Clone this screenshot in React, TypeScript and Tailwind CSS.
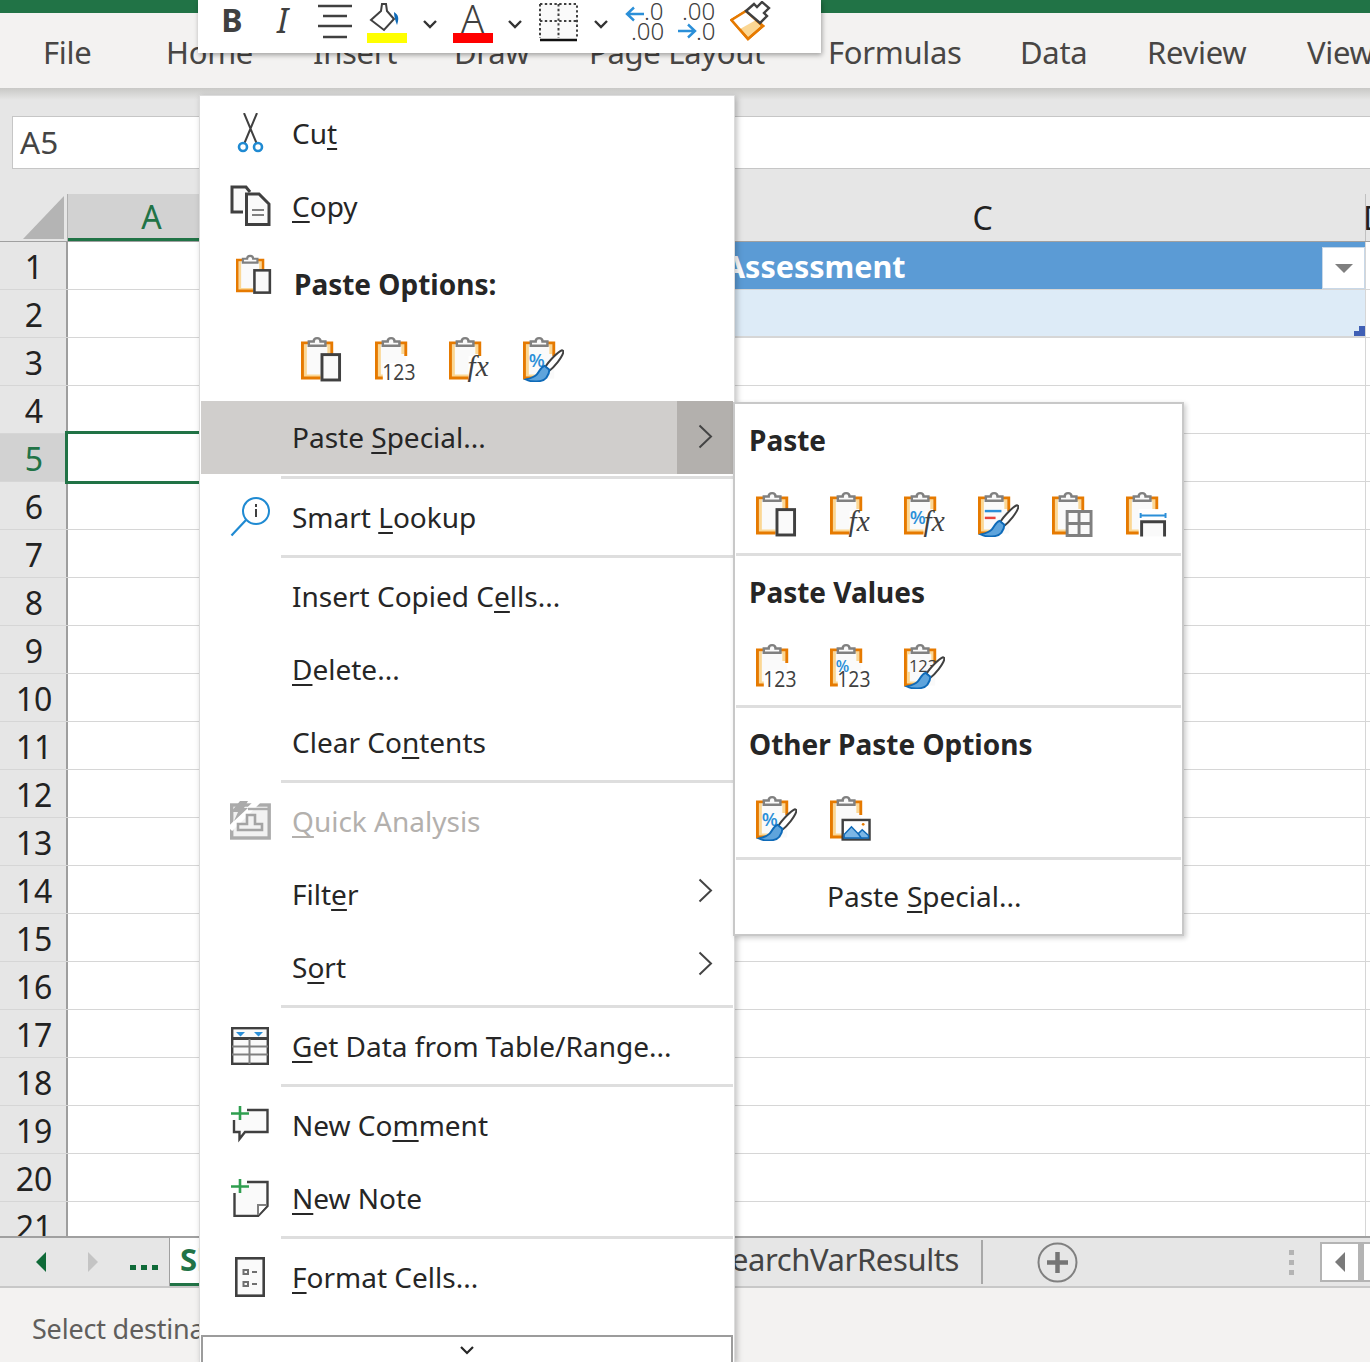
import type { ReactNode } from "react";

const UI = "font-['Open_Sans',sans-serif]";

const U = ({ children }: { children: ReactNode }) => (
  <span className="underline decoration-[1.5px] underline-offset-[4px] [text-decoration-skip-ink:none]">{children}</span>
);

const ClipBase = () => (
  <>
    <rect x="1" y="6" width="31" height="37" fill="#fafafa" />
    <path d="M4.5 8V40.5H20M24 8.5H28.5V18" fill="none" stroke="#fbd794" strokeWidth="3" />
    <path d="M8 6.5H1.5V42.5H20M25 6.5H31.5V20" fill="none" stroke="#e67a00" strokeWidth="3" />
    <path d="M8 9.5V5H13C13 0.5 20 0.5 20 5H25V9.5Z" fill="#fafafa" stroke="#808080" strokeWidth="2.5" />
  </>
);

const Brush = () => (
  <>
    <path d="M40 14C36 15 26 26 23 31L27 35C31 32 41 21 41.5 15Z" fill="#fff" stroke="#404040" strokeWidth="2" />
    <path d="M22 30C18 31 17 36 14 39C11 42 7 43 3 44C9 47 20 47 24 42C27 38 27 35 27 34Z" fill="#5ea4dc" stroke="#0e6ab8" strokeWidth="2" />
  </>
);

const Paper = () => <rect x="21.5" y="18.5" width="18" height="26" fill="#fafafa" stroke="#404040" strokeWidth="3" />;
const Num123 = () => (
  <>
    <rect x="8" y="27" width="34" height="19" fill="#fff" />
    <text x="7.5" y="45" fontSize="23" fontFamily="Open Sans" fill="#404040" textLength="34" lengthAdjust="spacingAndGlyphs">123</text>
  </>
);
const Fx = ({ x = 18 }: { x?: number }) => (
  <>
    <rect x={x + 2} y="20" width="24" height="26" fill="#fff" />
    <text x={x + 1} y="40" fontSize="30" fontStyle="italic" fontFamily="Liberation Serif" fill="#404040">fx</text>
  </>
);
const Pct = ({ y = 31, size = 19 }: { y?: number; size?: number }) => (
  <text x="6" y={y} fontSize={size} fontFamily="Open Sans" fontWeight="600" fill="#2b8fd8">%</text>
);

const PasteIcon = ({ children, size = 41 }: { children?: ReactNode; size?: number }) => (
  <svg width={size} height={(size * 46) / 41} viewBox="0 0 42 46" className="block shrink-0">
    <ClipBase />
    {children}
  </svg>
);

const icons = {
  all: <Paper />,
  values: <Num123 />,
  fx: <Fx />,
  fmtPct: (
    <>
      <Pct />
      <Brush />
    </>
  ),
  fmtLines: (
    <>
      <path d="M7 20H24" stroke="#2b8fd8" strokeWidth="2.5" />
      <path d="M7 27H18" stroke="#e8443a" strokeWidth="2.5" />
      <Brush />
    </>
  ),
  pctFx: (
    <>
      <Fx x={19} />
      <Pct y={33} size={19} />
    </>
  ),
  grid: (
    <path d="M15.5 20.5H40V45H15.5ZM15.5 32.7H40M27.7 20.5V45" fill="#fafafa" stroke="#808080" strokeWidth="3" />
  ),
  width: (
    <>
      <rect x="13" y="18" width="29" height="28" fill="#fff" />
      <path d="M15 22V27M15 24.5H40.5M40.5 22V27" fill="none" stroke="#2b8fd8" strokeWidth="2" />
      <path d="M16 46V31H39.5V46" fill="#fafafa" stroke="#404040" strokeWidth="3" />
    </>
  ),
  pctValues: (
    <>
      <Num123 />
      <Pct y={29} size={16} />
    </>
  ),
  valFmt: (
    <>
      <rect x="4" y="11" width="24" height="18" fill="#fafafa" />
      <text x="5" y="29" fontSize="17" fontFamily="Open Sans" fill="#404040">123</text>
      <Brush />
    </>
  ),
  picture: (
    <>
      <rect x="13" y="25" width="27.5" height="20" fill="#fff" stroke="#404040" strokeWidth="2.5" />
      <path d="M14.5 43.5V40L22 32L33 43.5Z" fill="#7cb7e6" stroke="#0e6ab8" strokeWidth="1.5" />
      <path d="M29 39L33 35L39.5 41V43.5H32Z" fill="#7cb7e6" stroke="#0e6ab8" strokeWidth="1.5" />
      <circle cx="34" cy="29.5" r="1.4" fill="#e67a00" />
    </>
  ),
};

const Chevron = ({ className = "" }: { className?: string }) => (
  <svg width="15" height="25" viewBox="0 0 15 25" className={className}>
    <path d="M1.5 1.5L13 12.5L1.5 23.5" fill="none" stroke="#444" strokeWidth="2" />
  </svg>
);

const SmallDown = () => (
  <svg width="14" height="9" viewBox="0 0 14 9" className="mx-auto block">
    <path d="M1 1L7 7L13 1" fill="none" stroke="#262626" strokeWidth="2.2" />
  </svg>
);

const Scissors = () => (
  <svg width="27" height="40" viewBox="0 0 27 40">
    <path d="M20 0L7.5 30M7 0L19.5 30" fill="none" stroke="#404040" strokeWidth="2" />
    <circle cx="6" cy="34" r="4" fill="#fff" stroke="#1f8ad2" strokeWidth="2.6" />
    <circle cx="21" cy="34" r="4" fill="#fff" stroke="#1f8ad2" strokeWidth="2.6" />
  </svg>
);

const CopyIcon = () => (
  <svg width="41" height="41" viewBox="0 0 41 41">
    <path d="M13 27H2V2H16L20 7" fill="#fafafa" stroke="#404040" strokeWidth="3" />
    <path d="M16.5 9H29L39 19V39.5H16.5Z" fill="#fafafa" stroke="#404040" strokeWidth="3" />
    <path d="M22 25H34M22 30H34" stroke="#808080" strokeWidth="2" />
  </svg>
);

const Lookup = () => (
  <svg width="41" height="41" viewBox="0 0 41 41">
    <circle cx="26" cy="15" r="13" fill="#fff" stroke="#1f8ad2" strokeWidth="2" />
    <path d="M16 24L1.5 39.5" stroke="#1f8ad2" strokeWidth="2.2" />
    <path d="M26 13V21M26 8V11" stroke="#404040" strokeWidth="2" />
  </svg>
);

const QuickAnalysis = () => (
  <svg width="41" height="39" viewBox="0 0 41 39">
    <rect x="1.7" y="4" width="37.5" height="33" fill="#f2f2f2" stroke="#ababab" strokeWidth="3.4" />
    <path d="M0 28L28 0" stroke="#fff" strokeWidth="6" />
    <path d="M10 0H18L14 7H18L4 20L8 11H1Z" fill="#ababab" />
    <path d="M18 8H38" stroke="#ababab" strokeWidth="2.4" />
    <path d="M8 29V23H17V14H25V23H32V29Z" fill="#f2f2f2" stroke="#a4a4a4" strokeWidth="2.6" />
  </svg>
);

const DataTable = () => (
  <svg width="38" height="38" viewBox="0 0 38 38">
    <rect x="1.2" y="1.2" width="35.6" height="35.6" fill="#fafafa" stroke="#404040" strokeWidth="2.4" />
    <rect x="1" y="10" width="36" height="3" fill="#404040" />
    <path d="M5 5H14L9.5 9.5ZM23 5H32L27.5 9.5Z" fill="#2b8fd8" />
    <path d="M1 19.5H37M1 27.5H37M18.5 12V37" stroke="#808080" strokeWidth="2" />
  </svg>
);

const PlusMark = () => <path d="M9 0V14M0 7.5H18" stroke="#2f9e4f" strokeWidth="2.6" fill="none" />;

const CommentIcon = () => (
  <svg width="38" height="38" viewBox="0 0 38 38">
    <path d="M16 4H36.5V26H14L8.5 33V26H3V14" fill="#fafafa" stroke="#404040" strokeWidth="2.4" />
    <PlusMark />
  </svg>
);

const NoteIcon = () => (
  <svg width="38" height="38" viewBox="0 0 38 38">
    <path d="M16 3H36.5V27L27 37H3.5V14" fill="#fafafa" stroke="#404040" strokeWidth="2.4" />
    <path d="M36 26H27V36" fill="#fff" stroke="#808080" strokeWidth="2" />
    <PlusMark />
  </svg>
);

const FormatIcon = () => (
  <svg width="30" height="40" viewBox="0 0 30 40">
    <rect x="1.3" y="1.3" width="27.4" height="37.4" fill="#fafafa" stroke="#404040" strokeWidth="2.6" />
    <path d="M8.5 13H13V17H8.5ZM8.5 25H13V29H8.5Z" fill="none" stroke="#707070" strokeWidth="2" />
    <path d="M17 15H22M17 27H22" stroke="#707070" strokeWidth="2" />
  </svg>
);

const Sep = () => (
  <div className="flex h-[6px] items-center pl-[80px]">
    <div className="h-[3px] w-full bg-[#dedede]" />
  </div>
);

type ItemProps = { icon?: ReactNode; children: ReactNode; arrow?: boolean; muted?: boolean; first?: boolean };

const Item = ({ icon, children, arrow, muted, first }: ItemProps) => (
  <div className={`flex items-center ${first ? "h-[72px]" : "h-[73px]"} ${muted ? "text-[#b3b0ad]" : "text-[#262626]"}`}>
    <div className="flex w-[80px] justify-center pl-[18px]">{icon}</div>
    <div className="flex-1 pl-[11px]">{children}</div>
    {arrow && <Chevron className="mr-[20px] -mt-[6px]" />}
  </div>
);

const ContextMenu = () => (
  <div className="absolute left-[199px] top-[95px] h-[1267px] w-[536px] border border-b-0 border-[#dcdcdc] bg-white px-[1px] pt-[1px] text-[28px] leading-none shadow-[2px_2px_6px_rgba(0,0,0,0.25)]">
    <Item first icon={<Scissors />}>Cu<U>t</U></Item>
    <Item icon={<CopyIcon />}><U>C</U>opy</Item>
    <div className="flex h-[82px] items-center">
      <div className="flex w-[80px] justify-center pb-[18px] pl-[26px]">
        <PasteIcon size={36}><Paper /></PasteIcon>
      </div>
      <div className="pl-[13px] pt-[2px] text-[28px] font-bold text-[#262626]">Paste Options:</div>
    </div>
    <div className="flex h-[77px] items-center gap-[33px] pb-[8px] pl-[100px]">
      <PasteIcon>{icons.all}</PasteIcon>
      <PasteIcon>{icons.values}</PasteIcon>
      <PasteIcon>{icons.fx}</PasteIcon>
      <PasteIcon>{icons.fmtPct}</PasteIcon>
    </div>
    <div className="flex h-[73px] items-center bg-[#d0cecc] text-[#262626]">
      <div className="flex-1 pb-[2px] pl-[91px]">Paste <U>S</U>pecial...</div>
      <div className="flex h-full w-[56px] items-center justify-center bg-[#b3b0ad]"><Chevron className="-mt-[2px]" /></div>
    </div>
    <Sep />
    <Item icon={<Lookup />}>Smart <U>L</U>ookup</Item>
    <Sep />
    <Item>Insert Copied C<U>e</U>lls...</Item>
    <Item><U>D</U>elete...</Item>
    <Item>Clear Co<U>n</U>tents</Item>
    <Sep />
    <Item muted icon={<QuickAnalysis />}><U>Q</U>uick Analysis</Item>
    <Item arrow>Filt<U>e</U>r</Item>
    <Item arrow>S<U>o</U>rt</Item>
    <Sep />
    <Item icon={<DataTable />}><U>G</U>et Data from Table/Range...</Item>
    <Sep />
    <Item icon={<CommentIcon />}>New Co<U>m</U>ment</Item>
    <Item icon={<NoteIcon />}><U>N</U>ew Note</Item>
    <Sep />
    <Item icon={<FormatIcon />}><U>F</U>ormat Cells...</Item>
    <div className="absolute bottom-0 left-[1px] right-[1px] flex h-[27px] items-center border-2 border-b-0 border-[#9c9c9c] bg-white pb-[2px] pt-[4px]">
      <SmallDown />
    </div>
  </div>
);

const SubHead = ({ children }: { children: ReactNode }) => (
  <div className="flex h-[77px] items-center pb-[6px] pl-[14px] text-[28px] font-bold text-[#262626]">{children}</div>
);

const SubIcons = ({ children }: { children: ReactNode }) => (
  <div className="flex h-[72px] items-center gap-[33px] pb-[6px] pl-[21px]">{children}</div>
);

const SubSep = () => <div className="mx-[1px] h-[3px] bg-[#dedede]" />;

const PasteSubmenu = () => (
  <div className="absolute left-[733px] top-[402px] h-[534px] w-[451px] border-2 border-[#c8c8c8] bg-white shadow-[2px_2px_5px_rgba(0,0,0,0.2)]">
    <SubHead>Paste</SubHead>
    <SubIcons>
      <PasteIcon>{icons.all}</PasteIcon>
      <PasteIcon>{icons.fx}</PasteIcon>
      <PasteIcon>{icons.pctFx}</PasteIcon>
      <PasteIcon>{icons.fmtLines}</PasteIcon>
      <PasteIcon>{icons.grid}</PasteIcon>
      <PasteIcon>{icons.width}</PasteIcon>
    </SubIcons>
    <SubSep />
    <SubHead>Paste Values</SubHead>
    <SubIcons>
      <PasteIcon>{icons.values}</PasteIcon>
      <PasteIcon>{icons.pctValues}</PasteIcon>
      <PasteIcon>{icons.valFmt}</PasteIcon>
    </SubIcons>
    <SubSep />
    <SubHead>Other Paste Options</SubHead>
    <SubIcons>
      <PasteIcon>{icons.fmtPct}</PasteIcon>
      <PasteIcon>{icons.picture}</PasteIcon>
    </SubIcons>
    <SubSep />
    <div className="flex h-[78px] items-center pb-[6px] pl-[92px] text-[28px] text-[#262626]">Paste <span className="w-[8px]" /><U>S</U>pecial...</div>
  </div>
);

const Tiny = () => (
  <svg width="14" height="9" viewBox="0 0 14 9" className="mx-auto block">
    <path d="M1 1L7 7L13 1" fill="none" stroke="#333" strokeWidth="2.4" />
  </svg>
);

const MiniToolbar = () => (
  <div className="absolute left-[198px] top-0 flex h-[53px] w-[623px] items-start bg-white pl-[9px] shadow-[1px_2px_5px_rgba(0,0,0,0.35)]">
    <div className="w-[50px] pt-[1px] text-center text-[32px] font-bold leading-[38px] text-[#404040]">B</div>
    <div className="w-[51px] pt-[1px] text-center font-['Liberation_Serif',serif] text-[34px] italic leading-[38px] text-[#404040]">I</div>
    <div className="w-[53px] pt-[4px]">
      <svg width="53" height="36" viewBox="0 0 53 36">
        <path d="M10 2H44M15 12H39M10 22H44M15 33H39" stroke="#404040" strokeWidth="2.6" />
      </svg>
    </div>
    <div className="w-[47px] pt-[3px]">
      <svg width="47" height="41" viewBox="0 0 47 41">
        <path d="M21 1L25 1L26 8L33 16L23 27L10 17L20 8Z" fill="none" stroke="#404040" strokeWidth="2" />
        <path d="M33 9C38 12 38 16 36 22C34 17 33 13 33 9Z" fill="#0e6ab8" />
        <rect x="6" y="30" width="40" height="10" fill="#ffff00" />
      </svg>
    </div>
    <div className="w-[43px] pt-[20px]"><Tiny /></div>
    <div className="relative h-[43px] w-[43px]">
      <div className="text-center text-[38px] font-light leading-[36px] text-[#404040]">A</div>
      <div className="absolute bottom-0 left-[2px] h-[10px] w-[40px] bg-[#ff0000]" />
    </div>
    <div className="w-[42px] pt-[20px]"><Tiny /></div>
    <div className="w-[44px] pt-[2px]">
      <svg width="44" height="40" viewBox="0 0 44 40">
        <rect x="4" y="2" width="37" height="36" fill="#fafafa" />
        <path d="M4 2H41V36M4 2V36M4 19H41M22.5 2V36" fill="none" stroke="#404040" strokeWidth="2" strokeDasharray="2.4 2.4" />
        <path d="M4 38H41" stroke="#111" strokeWidth="2.6" />
      </svg>
    </div>
    <div className="w-[42px] pt-[20px]"><Tiny /></div>
    <div className="relative h-[44px] w-[48px] text-[24px] font-light leading-[20px] text-[#404040]">
      <div className="pl-[22px] pt-[1px]">.0</div>
      <div className="pl-[9px]">.00</div>
      <svg width="20" height="16" viewBox="0 0 20 16" className="absolute left-[3px] top-[6px]">
        <path d="M19 8H2M9 1.5L2 8L9 14.5" fill="none" stroke="#2b8fd8" strokeWidth="2.4" />
      </svg>
    </div>
    <div className="relative h-[44px] w-[53px] text-[24px] font-light leading-[20px] text-[#404040]">
      <div className="pl-[12px] pt-[1px]">.00</div>
      <div className="pl-[26px]">.0</div>
      <svg width="20" height="16" viewBox="0 0 20 16" className="absolute left-[7px] top-[23px]">
        <path d="M1 8H18M11 1.5L18 8L11 14.5" fill="none" stroke="#2b8fd8" strokeWidth="2.4" />
      </svg>
    </div>
    <div className="w-[54px] pl-[7px] pt-[1px]">
      <svg width="41" height="40" viewBox="0 0 41 40">
        <path d="M1.5 19L16 10L33 25L18 38Z" fill="#fbd794" stroke="#e67a00" strokeWidth="2.6" />
        <path d="M1.5 19L16 10L26 19L10 28Z" fill="#fff" />
        <path d="M1.5 19L16 10L33 25L18 38Z" fill="none" stroke="#e67a00" strokeWidth="2.6" />
        <path d="M16 10L24 3L27 6L32 1L39 7L34 12L37 15L30 22Z" fill="#fff" stroke="#404040" strokeWidth="2.4" />
      </svg>
    </div>
  </div>
);

const tabs = [
  { label: "File", w: 123 },
  { label: "Home", w: 147 },
  { label: "Insert", w: 141 },
  { label: "Draw", w: 135 },
  { label: "Page Layout", w: 239 },
  { label: "Formulas", w: 192 },
  { label: "Data", w: 127 },
  { label: "Review", w: 160 },
  { label: "View", w: 80 },
];

const Ribbon = () => (
  <div className="flex h-[75px] items-center bg-[#f3f2f1] pl-[43px] text-[31px] tracking-[-0.3px] text-[#484644]">
    {tabs.map((tab) => (
      <div key={tab.label} className="shrink-0 pt-[4px]" style={{ width: tab.w }}>{tab.label}</div>
    ))}
  </div>
);

const RowHeader = ({ n }: { n: number }) => (
  <div
    className={`flex w-[68px] shrink-0 items-center justify-center border-r-2 pl-[2px] pt-[2px] text-[32px] ${
      n === 5 ? "border-[#217346] bg-[#d2d2d2] text-[#217346]" : "border-[#9e9e9e] bg-[#e6e6e6] text-[#222]"
    }`}
  >
    {n}
  </div>
);

const Row = ({ n }: { n: number }) => {
  const cBg = n === 1 ? "bg-[#5b9bd5]" : n === 2 ? "bg-[#ddebf7]" : "bg-white";
  return (
    <div className="flex h-[48px] shrink-0 border-b border-[#d6d6d6] bg-white">
      <RowHeader n={n} />
      <div className="relative w-[167px] shrink-0">
        {n === 5 && <div className="absolute -left-[3px] -right-[1px] -top-[3px] -bottom-[3px] border-[3px] border-[#217346]" />}
      </div>
      <div className="w-[365px] shrink-0" />
      <div className={`relative w-[766px] shrink-0 border-r border-[#d6d6d6] ${cBg} ${n === 2 ? "border-b border-[#9dc3e6]" : ""}`}>
        {n === 1 && (
          <>
            <div className="pl-[124px] pt-[1px] text-[30.5px] font-bold leading-[46px] text-white">Assessment</div>
            <div className="absolute right-0 top-[5px] flex h-[42px] w-[43px] items-center justify-center border border-[#c8d8e8] bg-white">
              <svg width="18" height="9" viewBox="0 0 18 9"><path d="M0 0H18L9 9Z" fill="#7f7f7f" /></svg>
            </div>
          </>
        )}
        {n === 2 && (
          <svg width="11" height="10" viewBox="0 0 11 10" className="absolute bottom-0 right-0">
            <path d="M5 0H11V10H0V5H5Z" fill="#3f5fb5" />
          </svg>
        )}
      </div>
    </div>
  );
};

const Sheet = () => (
  <div className="h-[994px] overflow-hidden bg-white">
    {Array.from({ length: 21 }, (_, i) => (
      <Row key={i} n={i + 1} />
    ))}
  </div>
);

const ColumnHeaders = () => (
  <div className="flex h-[48px] overflow-hidden border-b border-[#a0a0a0] bg-[#e6e6e6] text-[32px]">
    <div className="flex w-[68px] shrink-0 items-center justify-end border-r border-[#b0b0b0] pr-[3px]">
      <svg width="41" height="43" viewBox="0 0 41 43"><path d="M41 0V43H0Z" fill="#b4b4b4" /></svg>
    </div>
    <div className="flex w-[167px] shrink-0 items-center justify-center border-b-[3px] border-[#217346] bg-[#d2d2d2] pt-[2px] text-[#217346]">A</div>
    <div className="w-[365px] shrink-0" />
    <div className="flex w-[766px] shrink-0 items-center justify-center border-r border-[#c0c0c0] text-[#222]">C</div>
    <div className="flex-1 overflow-hidden pt-[1px] leading-[45px] text-[#222] [text-indent:-3px]">D</div>
  </div>
);

const FormulaBar = () => (
  <div className="h-[106px] bg-[linear-gradient(#c8c8c6,#e6e6e6_12px)] pt-[28px]">
    <div className="flex h-[53px]">
      <div className="ml-[12px] w-[300px] border border-[#c6c6c6] bg-white pl-[7px] text-[31.5px] leading-[50px] text-[#444]">A5</div>
      <div className="ml-[20px] flex-1 border-y border-[#c6c6c6] bg-white" />
    </div>
  </div>
);

const TabBar = () => (
  <div className="flex h-[52px] items-stretch border-y-2 border-t-[#a0a0a0] border-b-[#c8c8c8] bg-[#e6e6e6]">
    <div className="flex w-[170px] shrink-0 items-center border-r border-[#a0a0a0]">
      <svg width="10" height="20" viewBox="0 0 10 20" className="ml-[36px]"><path d="M10 0V20L0 10Z" fill="#0f6a38" /></svg>
      <svg width="10" height="20" viewBox="0 0 10 20" className="ml-[42px]"><path d="M0 0V20L10 10Z" fill="#c4c4c4" /></svg>
      <div className="ml-[32px] mt-[10px] flex gap-[5px]">
        <div className="h-[5px] w-[6px] bg-[#0f6a38]" />
        <div className="h-[5px] w-[6px] bg-[#0f6a38]" />
        <div className="h-[5px] w-[6px] bg-[#0f6a38]" />
      </div>
    </div>
    <div className="w-[300px] shrink-0 border-b-[3px] border-[#217346] bg-white pl-[10px] text-[31px] font-bold leading-[42px] text-[#217346]">Sheet1</div>
    <div className="flex w-[511px] shrink-0 items-center justify-end pb-[6px] pr-[22px] text-[31px] tracking-[-0.4px] text-[#444]">SearchVarResults</div>
    <div className="my-[2px] w-[2px] shrink-0 bg-[#a8a8a8]" />
    <svg width="41" height="41" viewBox="0 0 41 41" className="ml-[54px] mt-[4px] shrink-0">
      <circle cx="20.5" cy="20.5" r="19" fill="none" stroke="#808080" strokeWidth="2" />
      <path d="M20.5 10V31M10 20.5H31" stroke="#757575" strokeWidth="4.5" />
    </svg>
    <div className="ml-[211px] flex flex-col justify-center gap-[5px]">
      <div className="h-[5px] w-[5px] bg-[#b4b4b4]" />
      <div className="h-[5px] w-[5px] bg-[#b4b4b4]" />
      <div className="h-[5px] w-[5px] bg-[#b4b4b4]" />
    </div>
    <div className="ml-[26px] mt-[4px] flex h-[40px] w-[40px] shrink-0 items-center justify-center border-2 border-[#b4b4b4] bg-white">
      <svg width="10" height="20" viewBox="0 0 10 20"><path d="M10 0V20L0 10Z" fill="#7a7a7a" /></svg>
    </div>
    <div className="mt-[4px] h-[40px] flex-1 border-y-2 border-l-4 border-[#b4b4b4] bg-white" />
  </div>
);

export default function App() {
  return (
    <div className={`relative h-[1362px] w-[1370px] overflow-hidden bg-[#f3f2f1] ${UI}`}>
      <div className="h-[13px] bg-[#217346]" />
      <Ribbon />
      <FormulaBar />
      <ColumnHeaders />
      <Sheet />
      <TabBar />
      <div className="pl-[32px] pt-[23px] text-[27px] leading-[36px] tracking-[-0.2px] text-[#605e5c]">Select destination and press ENTER or choose Paste</div>
      <MiniToolbar />
      <ContextMenu />
      <PasteSubmenu />
    </div>
  );
}
